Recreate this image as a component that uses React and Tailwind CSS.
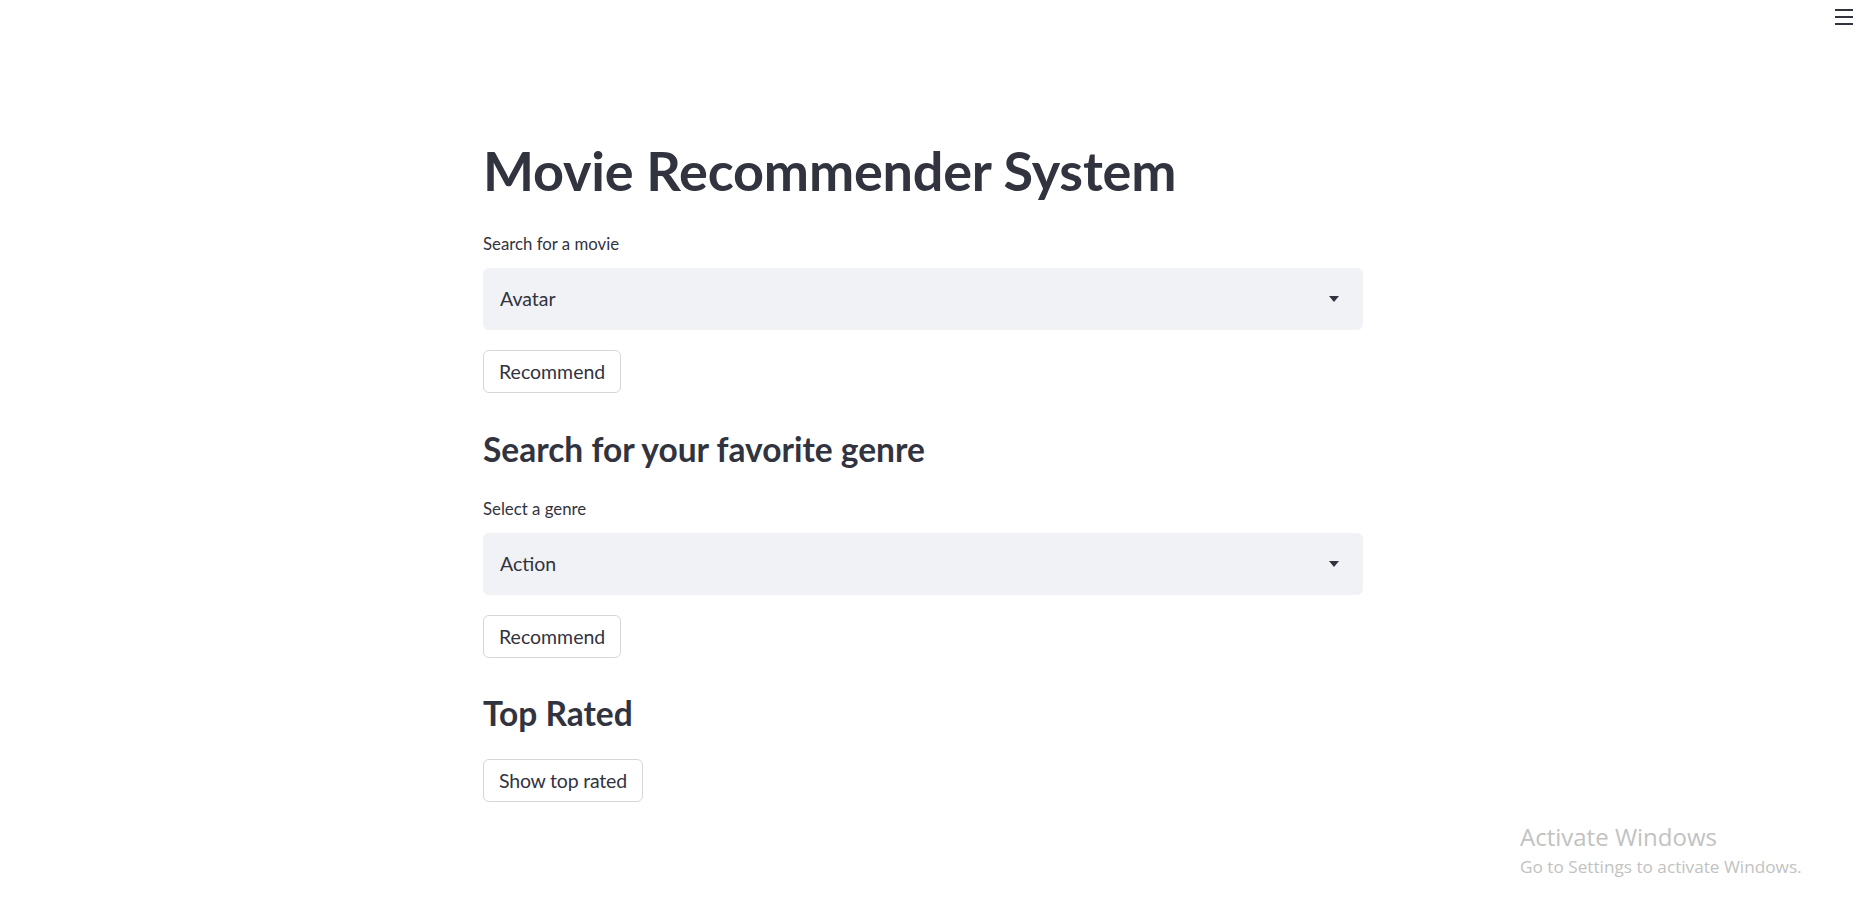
import React, { useState } from 'react';

// small caret used by streamlit selectboxes
const Caret = () => (
  <svg width="10" height="6" viewBox="0 0 10 6" className="shrink-0">
    <path d="M0 0h10L5 6z" fill="#31333f" />
  </svg>
);

const SelectBox = ({ label, value }) => (
  <div className="flex flex-col">
    <label className="text-[16.8px] leading-[20px] text-[#31333f] mb-[14px]">{label}</label>
    <div className="h-[62px] w-full rounded-[6px] bg-[#f0f2f6] flex items-center justify-between pl-[17px] pr-[24px]">
      <span className="text-[19.5px] text-[#31333f]">{value}</span>
      <Caret />
    </div>
  </div>
);

const Button = ({ children }) => (
  <button className="self-start h-[43px] px-[15px] rounded-[6px] border border-[#d6d6d9] bg-white text-[19.5px] text-[#31333f] leading-none">
    {children}
  </button>
);

const App = () => {
  const [movie] = useState('Avatar');
  const [genre] = useState('Action');

  return (
    <div className="relative min-h-[915px] bg-white font-['Lato',sans-serif] text-[#31333f]">
      {/* hamburger in the corner */}
      <button className="absolute right-[22px] top-[9px] flex flex-col gap-[5px]">
        <span className="block w-[18px] h-[2px] bg-[#31333f]" />
        <span className="block w-[18px] h-[2px] bg-[#31333f]" />
        <span className="block w-[18px] h-[2px] bg-[#31333f]" />
      </button>

      <div className="ml-[483px] w-[880px] pt-[140px] flex flex-col">
        <h1 className="text-[54px] font-bold leading-[62px] tracking-[-0.2px]">Movie Recommender System</h1>

        <div className="mt-[32px]">
          <SelectBox label="Search for a movie" value={movie} />
        </div>
        <div className="mt-[20px] flex">
          <Button>Recommend</Button>
        </div>

        <h2 className="mt-[36px] text-[33.5px] font-bold leading-[40px]">Search for your favorite genre</h2>

        <div className="mt-[30px]">
          <SelectBox label="Select a genre" value={genre} />
        </div>
        <div className="mt-[20px] flex">
          <Button>Recommend</Button>
        </div>

        <h2 className="mt-[35px] text-[33.5px] font-bold leading-[40px]">Top Rated</h2>
        <div className="mt-[26px] flex">
          <Button>
            <span className="tracking-[-0.2px]">Show top rated</span>
          </Button>
        </div>
      </div>

      {/* windows watermark */}
      <div className="absolute left-[1520px] top-[822px] text-[#c2c2c2] font-['Open_Sans',sans-serif]">
        <div className="text-[24px] leading-[30px]">Activate Windows</div>
        <div className="text-[17.2px] leading-[22px] mt-[4px]">Go to Settings to activate Windows.</div>
      </div>
    </div>
  );
};

export default App;
